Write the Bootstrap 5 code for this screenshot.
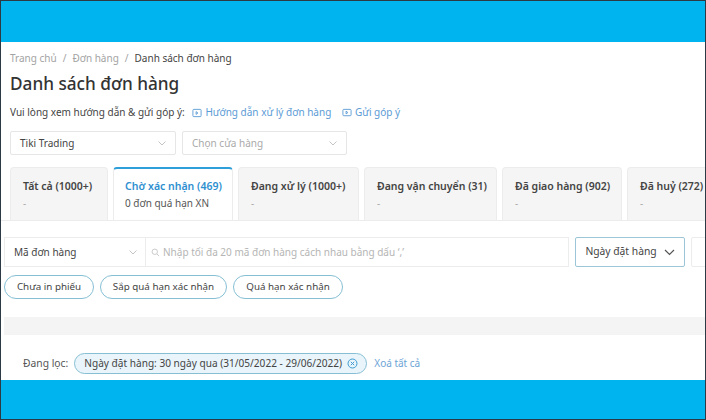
<!DOCTYPE html>
<html lang="vi">
<head>
  <meta charset="UTF-8">
  <title>Danh sách đơn hàng</title>
  <link href="https://cdn.jsdelivr.net/npm/bootstrap@5.3.2/dist/css/bootstrap.min.css" rel="stylesheet">
  <style>
    html, body { height: 420px; overflow: hidden; }
    body {
      font-family: "Noto Sans", "Open Sans", sans-serif;
      font-size: 10px;
      color: #3a3a3a;
      background: #fff;
    }
    .shot-frame {
      height: 420px;
      border: 1px solid #2b3a44;
      overflow: hidden;
    }
    .blue-band { background: #00b4ef; flex: 0 0 auto; }
    .band-top { height: 41px; }
    .band-bottom { height: 39px; }
    .page-body { flex: 1 1 auto; overflow: hidden; min-height: 0; }
    .crumbs { padding: 9px 0 0 9px; height: 23px; font-size: 10px; line-height: 15px; color: #a3a3a3; }
    .crumbs .sep { margin: 0 6px; }
    .crumbs .here { color: #444; }
    .page-title { font-size: 17.2px; font-weight: 500; line-height: 24px; margin: 7px 0 0 9px; color: #333; }
    .help-line { margin: 8px 0 0 9px; line-height: 16px; font-size: 10px; color: #444; }
    .help-line a { color: #5b9bd5; text-decoration: none; margin-left: 5px; }
    .help-line a + a { margin-left: 8px; }
    .help-line svg { vertical-align: -2px; margin-right: 3px; }
    .store-row { margin: 11px 0 0 9px; gap: 6px; }
    .fake-select {
      height: 24px; border: 1px solid #e6e6e6; border-radius: 2px; padding: 0 9px;
      font-size: 10px; color: #444; background: #fff;
    }
    .fake-select span { padding-top: 1px; }
    .fake-select.store { width: 166px; }
    .fake-select.store + .fake-select.store { width: 165px; color: #aaa; }
    .tab-strip { margin-top: 12px; padding-left: 9px; gap: 5px; height: 54px; border-bottom: 1px solid #ececec; overflow: hidden; }
    .order-tab {
      flex: 0 0 auto; height: 53px; background: #f5f5f5; border: 1px solid #ececec; border-bottom: 0;
      border-radius: 4px 4px 0 0; padding: 10px 0 0 12px; line-height: 16px; color: #aaa;
    }
    .order-tab:nth-child(1) { width: 98px; }
    .order-tab:nth-child(2) { width: 120px; }
    .order-tab:nth-child(3) { width: 121px; }
    .order-tab:nth-child(4) { width: 133px; }
    .order-tab:nth-child(5) { width: 120px; }
    .order-tab:nth-child(6) { width: 90px; }
    .order-tab b { display: block; font-weight: 600; font-size: 10.5px; color: #444; white-space: nowrap; margin-bottom: 1px; }
    .order-tab.is-active { background: #fff; border-top: 2px solid #2e9fd8; height: 54px; margin-bottom: -1px; padding-top: 9px; padding-left: 11px; color: #555; font-size: 10px; }
    .order-tab.is-active b { color: #2e8fd0; }
    .search-row { margin-top: 16px; padding-left: 3px; height: 30px; }
    .search-kind { width: 141px; height: 30px; border: 1px solid #ececec; border-right: 0; padding: 0 8px 0 9px; font-size: 10px; color: #444; }
    .search-box { width: 424px; height: 30px; border: 1px solid #ececec; padding-left: 5px; font-size: 10px; color: #b5b5b5; white-space: nowrap; }
    .search-box svg { margin-right: 3px; }
    .date-btn { width: 110px; height: 30px; margin-left: 6px; border: 1px solid #9cc6d8; border-radius: 2px; font-size: 10.3px; color: #444; background: #fff; }
    .date-btn svg { margin-left: 7px; }
    .more-btn { width: 30px; flex: 0 0 auto; height: 30px; margin-left: 6px; border: 1px solid #ececec; border-radius: 2px; }
    .quick-row { margin-top: 8px; padding-left: 3px; gap: 6px; }
    .quick-chip { height: 24px; border: 1px solid #86bfd4; border-radius: 12px; line-height: 22px; font-size: 9.8px; color: #444; background: #fff; text-align: center; }
    .quick-chip:nth-child(1) { width: 90px; }
    .quick-chip:nth-child(2) { width: 127px; }
    .quick-chip:nth-child(3) { width: 110px; }
    .gray-gap { height: 18px; margin: 18px 0 0 3px; background: #f4f4f4; }
    .filter-row { margin-top: 18px; padding-left: 22px; height: 21px; }
    .filter-row .lbl { font-size: 10.3px; margin-right: 6px; color: #555; }
    .filter-chip { height: 21px; width: 293px; background: #e9f5fb; border: 1px solid #86bfd4; border-radius: 11px; padding: 0 8px 0 9px; font-size: 10.1px; color: #444; white-space: nowrap; }
    .clear-all { color: #6da5d6; margin-left: 7px; font-size: 10px; text-decoration: none; }
  </style>
</head>
<body>
<div class="shot-frame d-flex flex-column">
  <div class="blue-band band-top"></div>
  <div class="page-body">
    <div class="crumbs">Trang chủ<span class="sep">/</span>Đơn hàng<span class="sep">/</span><span class="here">Danh sách đơn hàng</span></div>
    <h1 class="page-title">Danh sách đơn hàng</h1>
    <div class="help-line">Vui lòng xem hướng dẫn &amp; gửi góp ý:
      <a href="#"><svg width="10" height="10" viewBox="0 0 11 11" fill="none" stroke="#5b9bd5"><rect x="1" y="1.500" width="9" height="8" rx="1"/><path d="M4.500 4l2 1.500-2 1.500z"/></svg>Hướng dẫn xử lý đơn hàng</a>
      <a href="#"><svg width="10" height="10" viewBox="0 0 11 11" fill="none" stroke="#5b9bd5"><rect x="1" y="1.500" width="9" height="7" rx="1"/><path d="M4.500 3.500l2 1.500-2 1.500z"/></svg>Gửi góp ý</a>
    </div>
    <div class="store-row d-flex">
      <div class="fake-select store d-flex align-items-center justify-content-between"><span>Tiki Trading</span><svg width="8" height="5" viewBox="0 0 8 5" fill="none" stroke="#c4c4c4"><path d="M.5.5 4 4 7.500.5"/></svg></div>
      <div class="fake-select store d-flex align-items-center justify-content-between"><span>Chọn cửa hàng</span><svg width="8" height="5" viewBox="0 0 8 5" fill="none" stroke="#c4c4c4"><path d="M.5.5 4 4 7.500.5"/></svg></div>
    </div>
    <div class="tab-strip d-flex">
      <div class="order-tab"><b>Tất cả (1000+)</b>-</div>
      <div class="order-tab is-active"><b>Chờ xác nhận (469)</b>0 đơn quá hạn XN</div>
      <div class="order-tab"><b>Đang xử lý (1000+)</b>-</div>
      <div class="order-tab"><b>Đang vận chuyển (31)</b>-</div>
      <div class="order-tab"><b>Đã giao hàng (902)</b>-</div>
      <div class="order-tab"><b>Đã huỷ (272)</b>-</div>
    </div>
    <div class="search-row d-flex">
      <div class="search-kind d-flex flex-shrink-0 align-items-center justify-content-between"><span>Mã đơn hàng</span><svg width="8" height="5" viewBox="0 0 8 5" fill="none" stroke="#c4c4c4"><path d="M.5.5 4 4 7.500.5"/></svg></div>
      <div class="search-box d-flex flex-shrink-0 align-items-center"><svg width="9" height="9" viewBox="0 0 10 10" fill="none" stroke="#c4c4c4"><circle cx="4.200" cy="4.200" r="3"/><path d="M6.500 6.500 9 9"/></svg>Nhập tối đa 20 mã đơn hàng cách nhau bằng dấu ‘,’</div>
      <div class="date-btn d-flex flex-shrink-0 align-items-center justify-content-center">Ngày đặt hàng<svg width="11" height="7" viewBox="0 0 11 7" fill="none" stroke="#555" stroke-width="1.2"><path d="M1 1l4.500 4.500L10 1"/></svg></div>
      <div class="more-btn"></div>
    </div>
    <div class="quick-row d-flex">
      <div class="quick-chip">Chưa in phiếu</div>
      <div class="quick-chip">Sắp quá hạn xác nhận</div>
      <div class="quick-chip">Quá hạn xác nhận</div>
    </div>
    <div class="gray-gap"></div>
    <div class="filter-row d-flex align-items-center">
      <span class="lbl">Đang lọc:</span>
      <div class="filter-chip d-flex flex-shrink-0 align-items-center justify-content-between"><span>Ngày đặt hàng: 30 ngày qua (31/05/2022 - 29/06/2022)</span><svg width="11" height="11" viewBox="0 0 11 11" fill="none" stroke="#3d9ad1"><circle cx="5.500" cy="5.500" r="4.500"/><path d="M3.800 3.800l3.400 3.400M7.200 3.800l-3.400 3.400"/></svg></div>
      <a class="clear-all" href="#">Xoá tất cả</a>
    </div>
  </div>
  <div class="blue-band band-bottom"></div>
</div>
<script src="https://cdn.jsdelivr.net/npm/bootstrap@5.3.2/dist/js/bootstrap.bundle.min.js"></script>
</body>
</html>
